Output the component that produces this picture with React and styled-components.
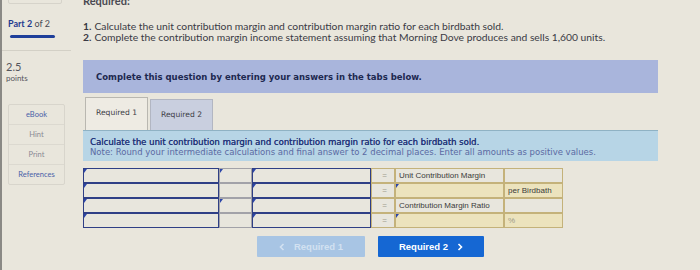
import React from "react";
import styled, { createGlobalStyle } from "styled-components";

const Global = createGlobalStyle`
  html, body { margin: 0; padding: 0; background: #e9e6dc; }
  #root { width: 700px; height: 270px; overflow: hidden; }
`;

const Page = styled.div`
  width: 700px;
  height: 270px;
  display: grid;
  grid-template-columns: 69px 1fr;
  column-gap: 12px;
  background: #e9e6dc;
  border-left: 2px solid #8a8985;
  box-sizing: border-box;
  font-family: "Lato", "Open Sans", sans-serif;
  overflow: hidden;
`;

const Sidebar = styled.aside`
  display: flex;
  flex-direction: column;
`;

const TopStub = styled.div`
  margin: -10px 0 0 6px;
  width: 54px;
  height: 14px;
  border: 1px solid #d6d3ca;
  border-radius: 2px;
  box-sizing: border-box;
`;

const PartBlock = styled.div`
  padding: 14px 0 0 6px;
  height: 32px;
  border-bottom: 1px solid #d3d0c6;
`;

const PartLabel = styled.div`
  font-size: 9px;
  color: #4a4a55;
  line-height: 12px;
  b { color: #1f3a8f; font-weight: 700; }
`;

const Progress = styled.div`
  margin: 5px 0 0 2px;
  width: 45px;
  height: 3px;
  border-radius: 2px;
  background: #1f3f9a;
`;

const Points = styled.div`
  padding: 10px 0 0 4px;
  color: #55555c;
  div:first-child { font-size: 11px; line-height: 12px; }
  div:last-child { font-size: 8px; line-height: 11px; }
`;

const ToolBox = styled.div`
  margin: 20px 0 0 6px;
  width: 55px;
  border: 1px solid #d8d5cc;
  border-radius: 2px;
  display: flex;
  flex-direction: column;
`;

const Tool = styled.div`
  height: 19px;
  display: flex;
  align-items: center;
  justify-content: center;
  font-size: 7.5px;
  color: ${(p) => (p.$blue ? "#4a5fa8" : "#8a8a94")};
  border-top: ${(p) => (p.$first ? "none" : "1px solid #dcd9d0")};
`;

const Main = styled.main`
  display: flex;
  flex-direction: column;
  width: 575px;
`;

const Heading = styled.div`
  margin-top: -6px;
  font-size: 11px;
  font-weight: 700;
  color: #4a4a52;
  line-height: 13px;
`;

const Instructions = styled.ol`
  margin: 14px 0 0 0;
  padding: 0;
  list-style: none;
  font-size: 10.3px;
  line-height: 11px;
  color: #3a3a44;
  li b { font-weight: 700; margin-right: 3px; }
`;

const Banner = styled.div`
  margin-top: 17px;
  height: 33px;
  background: #a9b5dc;
  display: flex;
  align-items: center;
  padding-left: 13px;
  font-family: "DejaVu Sans", Verdana, sans-serif;
  font-weight: 700;
  font-size: 8.5px;
  color: #1d2850;
`;

const Tabs = styled.div`
  margin-top: 4px;
  padding-left: 2px;
  display: flex;
  gap: 2px;
  align-items: flex-end;
  height: 33px;
`;

const Tab = styled.div`
  width: 63px;
  height: ${(p) => (p.$active ? "33px" : "31px")};
  box-sizing: border-box;
  border: 1px solid ${(p) => (p.$active ? "#b9b7b0" : "#b2b6c2")};
  border-bottom: none;
  background: ${(p) => (p.$active ? "#eeebe3" : "#c9cfdf")};
  display: flex;
  align-items: center;
  justify-content: center;
  padding-bottom: ${(p) => (p.$active ? "4px" : "2px")};
  font-family: "DejaVu Sans", Verdana, sans-serif;
  font-size: 7.6px;
  color: #3c3c46;
`;

const Panel = styled.div`
  height: 31px;
  box-sizing: border-box;
  background: #b7d5e6;
  border-top: 1px solid #8fb2c4;
  padding: 6px 0 0 7px;
  font-family: "DejaVu Sans", Verdana, sans-serif;
  font-size: 8.5px;
  line-height: 10px;
`;

const PanelLine = styled.div`
  color: ${(p) => (p.$note ? "#5b6aa3" : "#24357a")};
  text-shadow: ${(p) => (p.$note ? "none" : "0.2px 0 0 #24357a")};
`;

const Table = styled.div`
  margin-top: 7px;
  display: grid;
  grid-template-columns: 136px 33px 119px 24px 109px 59px;
  grid-auto-rows: 15px;
  width: 480px;
  font-family: "Liberation Sans", Arial, sans-serif;
  font-size: 8px;
  color: #3a3a3a;
`;

const Cell = styled.div`
  position: relative;
  box-sizing: border-box;
  display: flex;
  align-items: center;
  padding-left: 3px;
  background: ${(p) => p.$bg || "#e8e6dd"};
  border: ${(p) =>
    p.$kind === "input"
      ? "1.5px solid #2f3f85"
      : p.$kind === "mid"
      ? "1px solid #a2a2a8"
      : "1px solid #c4b27a"};
  justify-content: ${(p) => (p.$center ? "center" : "flex-start")};
  color: ${(p) => (p.$muted ? "#9a9a8a" : "#3a3a3a")};
`;

const Marker = styled.span`
  position: absolute;
  top: 0;
  left: 0;
  width: 0;
  height: 0;
  border-top: 4px solid #2b45a8;
  border-right: 3px solid transparent;
`;

const Buttons = styled.div`
  margin-top: 8px;
  display: flex;
  justify-content: center;
  gap: 13px;
`;

const NavButton = styled.div`
  width: ${(p) => p.$w}px;
  height: 21px;
  display: flex;
  align-items: center;
  justify-content: center;
  gap: 9px;
  font-family: "Liberation Sans", Arial, sans-serif;
  font-weight: 700;
  font-size: 9.5px;
  background: ${(p) => (p.$disabled ? "#a8c5e4" : "#1567d3")};
  color: ${(p) => (p.$disabled ? "#d2e1f1" : "#ffffff")};
  border-radius: 1px;
`;

const Chevron = ({ dir }) => (
  <svg width="6" height="8" viewBox="0 0 6 8" aria-hidden="true">
    <path
      d={dir === "left" ? "M4.5 1 L1.5 4 L4.5 7" : "M1.5 1 L4.5 4 L1.5 7"}
      fill="none"
      stroke="currentColor"
      strokeWidth="1.6"
    />
  </svg>
);

const rows = [
  { label: "Unit Contribution Margin", unit: "", input: false, c2marker: true },
  { label: "", unit: "per Birdbath", input: true, c2marker: false },
  { label: "Contribution Margin Ratio", unit: "", input: false, c2marker: true },
  { label: "", unit: "%", input: true, c2marker: false },
];

export default function App() {
  return (
    <>
      <Global />
      <Page>
        <Sidebar>
          <TopStub />
          <PartBlock>
            <PartLabel>
              <b>Part 2</b> of 2
            </PartLabel>
            <Progress />
          </PartBlock>
          <Points>
            <div>2.5</div>
            <div>points</div>
          </Points>
          <ToolBox>
            <Tool $first $blue>eBook</Tool>
            <Tool>Hint</Tool>
            <Tool>Print</Tool>
            <Tool $blue>References</Tool>
          </ToolBox>
        </Sidebar>
        <Main>
          <Heading>Required:</Heading>
          <Instructions>
            <li>
              <b>1.</b>Calculate the unit contribution margin and contribution margin ratio for each birdbath sold.
            </li>
            <li>
              <b>2.</b>Complete the contribution margin income statement assuming that Morning Dove produces and sells 1,600 units.
            </li>
          </Instructions>
          <Banner>Complete this question by entering your answers in the tabs below.</Banner>
          <Tabs>
            <Tab $active>Required 1</Tab>
            <Tab>Required 2</Tab>
          </Tabs>
          <Panel>
            <PanelLine>Calculate the unit contribution margin and contribution margin ratio for each birdbath sold.</PanelLine>
            <PanelLine $note>Note: Round your intermediate calculations and final answer to 2 decimal places. Enter all amounts as positive values.</PanelLine>
          </Panel>
          <Table>
            {rows.map((r, i) => (
              <React.Fragment key={i}>
                <Cell $kind="input"><Marker /></Cell>
                <Cell $kind="mid">{r.c2marker && <Marker />}</Cell>
                <Cell $kind="input"><Marker /></Cell>
                <Cell $kind="tan" $center $muted>=</Cell>
                <Cell $kind="tan" $bg={r.input ? "#ece3bd" : undefined}>
                  {r.input ? <Marker /> : r.label}
                </Cell>
                <Cell $kind="tan" $bg={r.input ? "#ece3bd" : undefined} $muted={r.unit === "%"}>
                  {r.unit}
                </Cell>
              </React.Fragment>
            ))}
          </Table>
          <Buttons>
            <NavButton $w={108} $disabled>
              <Chevron dir="left" />
              <span>Required 1</span>
            </NavButton>
            <NavButton $w={106}>
              <span>Required 2</span>
              <Chevron dir="right" />
            </NavButton>
          </Buttons>
        </Main>
      </Page>
    </>
  );
}
